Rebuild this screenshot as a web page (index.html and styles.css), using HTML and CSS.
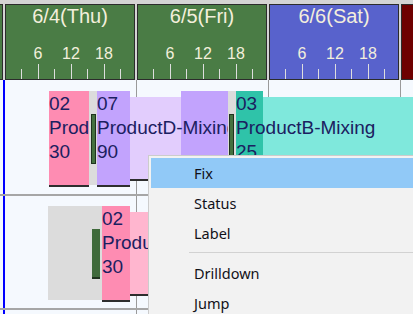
FILE: index.html
```html
<!DOCTYPE html>
<html>
<head>
<meta charset="utf-8">
<link rel="stylesheet" href="styles.css">
</head>
<body>
<div class="screen">
  <div class="header">
    <div class="day green"></div>
    <div class="day green">
      <div class="date">6/4(Thu)</div>
      <div class="hours"><span>6</span><span>12</span><span>18</span></div>
      <svg class="ticks" width="128" height="15" viewBox="0 0 128 15">
        <path d="M15.5 5V15M32.5 0V15M48.5 5V15M65.5 0V15M81.5 5V15M98.5 0V15M114.5 5V15"/>
      </svg>
    </div>
    <div class="day green">
      <div class="date">6/5(Fri)</div>
      <div class="hours"><span>6</span><span>12</span><span>18</span></div>
      <svg class="ticks" width="128" height="15" viewBox="0 0 128 15">
        <path d="M15.5 5V15M32.5 0V15M48.5 5V15M65.5 0V15M81.5 5V15M98.5 0V15M114.5 5V15"/>
      </svg>
    </div>
    <div class="day blue">
      <div class="date">6/6(Sat)</div>
      <div class="hours"><span>6</span><span>12</span><span>18</span></div>
      <svg class="ticks" width="128" height="15" viewBox="0 0 128 15">
        <path d="M15.5 5V15M32.5 0V15M48.5 5V15M65.5 0V15M81.5 5V15M98.5 0V15M114.5 5V15"/>
      </svg>
    </div>
    <div class="day red"></div>
  </div>

  <div class="chart">
    <div class="now"></div>

    <div class="row row1">
      <div class="op op-a">
        <div class="bar pink full"></div>
        <div class="label">02<br>Product-Mixing<br>30</div>
      </div>
      <div class="setup setup-b"><div class="mark"></div></div>
      <div class="op op-c">
        <div class="bar purple full c1"></div>
        <div class="bar lavender short c2"></div>
        <div class="bar purple full c3"></div>
        <div class="label">07<br>ProductD-Mixing<br>90</div>
      </div>
      <div class="setup setup-d"><div class="mark"></div></div>
      <div class="op op-e">
        <div class="bar teal full e1"></div>
        <div class="bar cyan short e2"></div>
        <div class="label">03<br>ProductB-Mixing<br>25</div>
      </div>
    </div>

    <div class="row row2">
      <div class="setup setup-f"><div class="mark wide"></div></div>
      <div class="op op-g">
        <div class="bar pink full g1"></div>
        <div class="bar lightpink short g2"></div>
        <div class="label">02<br>Product-Mixing<br>30</div>
      </div>
    </div>

    <div class="row row3"></div>
  </div>

  <div class="menu">
    <div class="item active">Fix</div>
    <div class="item">Status</div>
    <div class="item">Label</div>
    <div class="sep"></div>
    <div class="item">Drilldown</div>
    <div class="item">Jump</div>
  </div>
</div>
</body>
</html>
```

FILE: styles.css
```css
html, body {
  margin: 0;
  padding: 0;
  background: #f5f9fe;
}

.screen {
  position: relative;
  width: 413px;
  height: 314px;
  overflow: hidden;
  font-family: "Liberation Sans", Arial, sans-serif;
}

/* ---------- header ---------- */
.header {
  display: flex;
  gap: 2px;
  margin-left: -127px;
  padding-top: 4px;
  background: #d4d4d4;
  height: 76px;
}

.day {
  flex: 0 0 130px;
  box-sizing: border-box;
  height: 76px;
  border: 1px solid #2c2c2c;
  display: flex;
  flex-direction: column;
  color: #f3efdc;
}

.green { background: #4a7c45; }
.blue { background: #5862cc; }
.red { background: #6e0000; }

.date {
  height: 23px;
  line-height: 23px;
  font-size: 20px;
  text-align: center;
}

.hours {
  display: grid;
  grid-template-columns: repeat(3, 33px);
  margin-left: 15.5px;
  margin-top: 17px;
  height: 18px;
  line-height: 18px;
  font-size: 16px;
}

.hours span {
  text-align: center;
}

.ticks {
  display: block;
  margin-top: 1px;
}

.ticks path {
  stroke: #dedede;
  stroke-width: 1;
  fill: none;
}

/* ---------- chart ---------- */
.chart {
  position: relative;
  height: 234px;
  padding-top: 2px;
  box-sizing: border-box;
  background-color: #f5f9fe;
  background-image: repeating-linear-gradient(to right, transparent 0 131px, #9a9a9a 131px 132px);
  background-position: 5px 0;
}

.now {
  position: absolute;
  left: 3px;
  top: 0;
  bottom: 0;
  width: 2px;
  background: #0000ff;
}

.row {
  position: relative;
  height: 112px;
  border-bottom: 2px solid #a6a6a6;
}

.row3 {
  height: 20px;
}

.op {
  position: absolute;
  height: 96px;
  overflow: hidden;
}

.row1 .op { top: 9px; }
.row2 .op { top: 10px; }

.op-a { left: 49px; width: 40px; }
.op-c { left: 97px; width: 132px; }
.op-e { left: 236px; width: 200px; }
.op-g { left: 102px; width: 100px; }

.bar {
  position: absolute;
  box-sizing: border-box;
  border-bottom: 2px solid #2e2e2e;
}

.bar.full {
  top: 0;
  left: 0;
  width: 100%;
  height: 96px;
}

.bar.short {
  top: 6px;
  height: 84px;
}

.c1 { left: 0; width: 33px !important; }
.c2 { left: 33px; width: 51px; }
.c3 { left: 84px !important; width: 48px !important; }
.e1 { width: 27px !important; }
.e2 { left: 27px; width: 173px; }
.g1 { width: 28px !important; }
.g2 { left: 28px; width: 72px; }

.pink { background: #fe8cb2; }
.lightpink { background: #ffb6cf; }
.purple { background: #c2a3fd; }
.lavender { background: #e2cdfd; }
.teal { background: #2fc3a9; }
.cyan { background: #7fe8dc; }

.label {
  position: relative;
  padding-top: 1px;
  font-size: 19px;
  line-height: 24px;
  color: #1b2060;
  white-space: nowrap;
}

.setup {
  position: absolute;
  background: #dcdcdc;
  height: 94px;
}

.row1 .setup { top: 9px; }
.row2 .setup { top: 10px; }

.setup-b { left: 89px; width: 8px; }
.setup-d { left: 228px; width: 8px; }
.setup-f { left: 48px; width: 54px; }

.mark {
  position: absolute;
  top: 23px;
  box-sizing: border-box;
  width: 5px;
  height: 50px;
  background: #44713f;
  border: 1px solid #1f331e;
}

.setup-b .mark { left: 2px; }
.setup-d .mark { left: 1px; }
.mark.wide {
  left: 44px;
  width: 8px;
  border-width: 0 0 2px 0;
  background: #3f6a3b;
}

/* ---------- context menu ---------- */
.menu {
  position: absolute;
  left: 148px;
  top: 155px;
  width: 300px;
  height: 200px;
  box-sizing: border-box;
  padding: 2px;
  background: #f2f2f2;
  border: 1px solid #cccccc;
  font-family: "Noto Sans", "Open Sans", sans-serif;
  font-size: 14.5px;
  color: #111118;
}

.item {
  height: 30px;
  line-height: 30px;
  padding-left: 43px;
}

.item.active {
  background: #91c9f7;
}

.sep {
  height: 1px;
  margin: 4px 0 5px 38px;
  background: #d2d2d2;
}
```
